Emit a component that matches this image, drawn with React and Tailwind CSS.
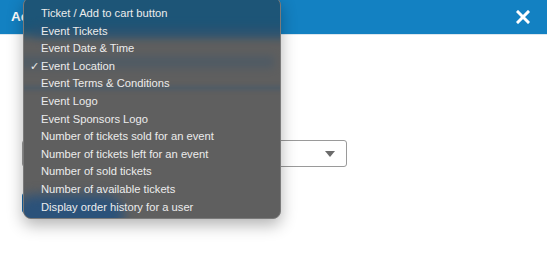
import React from "react";

const items = [
  "Ticket / Add to cart button",
  "Event Tickets",
  "Event Date & Time",
  "Event Location",
  "Event Terms & Conditions",
  "Event Logo",
  "Event Sponsors Logo",
  "Number of tickets sold for an event",
  "Number of tickets left for an event",
  "Number of sold tickets",
  "Number of available tickets",
  "Display order history for a user",
];

export default function App() {
  return (
    <div
      className="relative w-[547px] h-[260px] bg-white overflow-hidden"
      style={{ fontFamily: '"Helvetica Neue", "Liberation Sans", Arial, sans-serif' }}
    >
      {/* header */}
      <div className="flex items-center justify-between h-[34px] bg-[#1381c2] pl-[11px] pr-[17px]">
        <span className="text-white font-bold text-[13.5px]">Add Shortcode</span>
        <svg width="14" height="14" viewBox="0 0 14 14">
          <path d="M2 2 L12 12 M12 2 L2 12" stroke="white" strokeWidth="3" strokeLinecap="square" />
        </svg>
      </div>
      <div className="border-t border-[#dbe6ee]" />

      {/* body */}
      <div className="flex flex-col pl-[22px] pt-[105px]">
        <div className="flex justify-end w-[325px] h-[27px] border border-[#9a9a9a] rounded-[3px] items-center pr-[11px]">
          <svg width="10" height="6" viewBox="0 0 10 6">
            <path d="M0 0 L10 0 L5 6 Z" fill="#6b6b6b" />
          </svg>
        </div>
        <div className="mt-[26px] w-[90px] h-[20px] bg-[#1466a8] rounded-[3px]" />
      </div>

      {/* dropdown menu */}
      <div className="absolute left-[23px] top-[-3px] w-[258px] h-[222px] rounded-[8px] overflow-hidden bg-[#5f5f5f] border border-[#7a7a7a] shadow-[0_6px_16px_rgba(0,0,0,0.3)]">
        <div className="absolute left-[-10px] top-[-10px] w-[290px] h-[47px] bg-[#1d5577] blur-[5px]" />
        <div className="absolute left-[8px] top-[28px] w-[260px] h-[12px] bg-[#2c5170] blur-[4px] opacity-60" />
        <div className="absolute left-[-10px] top-[58px] w-[260px] h-[12px] bg-[#3f566a] blur-[4px] opacity-50" />
        <div className="absolute left-[-10px] top-[88px] w-[290px] h-[4px] bg-[#44596b] blur-[2px] opacity-70" />
        <div className="absolute left-[-10px] top-[197px] w-[110px] h-[40px] bg-[#2b527a] blur-[6px] rounded-full" />
        <div className="relative flex flex-col pt-[7px] text-[11.2px] text-[#ececec] leading-[17.6px]">
          {items.map((t, i) => (
            <div key={i} className="flex items-center pl-[6px]">
              <span className="w-[11px] text-[11px]">{t === "Event Location" ? "✓" : ""}</span>
              <span>{t}</span>
            </div>
          ))}
        </div>
      </div>
    </div>
  );
}
